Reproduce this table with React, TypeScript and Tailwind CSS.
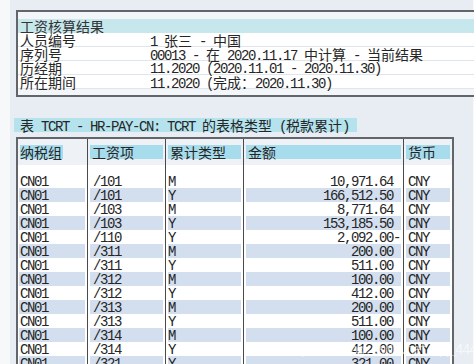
import React from "react";

const CJK_SPLIT = /([\u2E80-\u9FFF\u3000-\u303F\uFF01-\uFF60]+)/;
const CJK_TEST = /^[\u2E80-\u9FFF\u3000-\u303F\uFF01-\uFF60]/;

// SAP GUI style: CJK full width 14px, latin half width 7px
function Txt({ s }: { s: string }) {
  return (
    <>
      {s.split(CJK_SPLIT).map((p, i) =>
        p === "" ? null : CJK_TEST.test(p) ? (
          <span key={i} className="font-['Noto_Sans_CJK_SC',sans-serif]">
            {p}
          </span>
        ) : (
          <span
            key={i}
            className="font-['Liberation_Mono',monospace] tracking-[-1.4px]"
          >
            {p}
          </span>
        )
      )}
    </>
  );
}

const info = [
  ["人员编号", "1 张三 - 中国"],
  ["序列号", "00013 - 在 2020.11.17 中计算 - 当前结果"],
  ["历经期", "11.2020 (2020.11.01 - 2020.11.30)"],
  ["所在期间", "11.2020 (完成：2020.11.30)"],
];

const rows = [
  ["/101", "M", "10,971.64 "],
  ["/101", "Y", "166,512.50 "],
  ["/103", "M", "8,771.64 "],
  ["/103", "Y", "153,185.50 "],
  ["/110", "Y", "2,092.00-"],
  ["/311", "M", "200.00 "],
  ["/311", "Y", "511.00 "],
  ["/312", "M", "100.00 "],
  ["/312", "Y", "412.00 "],
  ["/313", "M", "200.00 "],
  ["/313", "Y", "511.00 "],
  ["/314", "M", "100.00 "],
  ["/314", "Y", "412.00 "],
  ["/321", "Y", "321.00 "],
];

export default function App() {
  return (
    <div className="relative flex w-[474px] h-[364px] overflow-hidden bg-[#f6f8fa] text-[14px] leading-[14px] text-[#262626] whitespace-pre">
      <div className="ml-[10px] w-[463px] h-full bg-[#e8edf4] pt-[10px] flex flex-col">
        {/* result box */}
        <div className="ml-[6px] w-[460px] border-2 border-r-0 border-[#62666b] bg-[#f3f6f9] pt-[7px] pb-[6px]">
          <div className="h-[14px] bg-[#c6e8ec] pl-[2px] text-[#333]">
            <Txt s="工资核算结果" />
          </div>
          {info.map(([k, v]) => (
            <div
              key={k}
              className="flex h-[14px] bg-white border-b border-[#dfe5ec] pl-[2px]"
            >
              <div className="w-[130px]">
                <Txt s={k} />
              </div>
              <div>
                <Txt s={v} />
              </div>
            </div>
          ))}
        </div>

        {/* table title */}
        <div className="mt-[21px] ml-[4px] w-fit h-[14px] bg-[#b4e2ed] pl-[6px] pr-[8px]">
          <Txt s="表 TCRT - HR-PAY-CN: TCRT 的表格类型 (税款累计)" />
        </div>

        {/* table */}
        <div className="mt-[5px] ml-[6px] w-[438px] border-2 border-[#62666b] bg-white">
          <div className="flex h-[26px] bg-[#eef2f6]">
            <div className="w-[69px] pl-[2px] pt-[6px]">
              <div className="w-fit h-[14px] bg-[#a7dced] pr-[1px]">
                <Txt s="纳税组" />
              </div>
            </div>
            <div className="w-[78px] border-l border-[#4a4a4a] px-[2px] pt-[6px]">
              <div className="h-[14px] bg-[#a7dced] pl-[2px]">
                <Txt s="工资项" />
              </div>
            </div>
            <div className="w-[78px] border-l border-[#4a4a4a] px-[2px] pt-[6px]">
              <div className="h-[14px] bg-[#a7dced] pl-[2px]">
                <Txt s="累计类型" />
              </div>
            </div>
            <div className="w-[160px] border-l border-[#4a4a4a] px-[2px] pt-[6px]">
              <div className="h-[14px] bg-[#a7dced] pl-[2px]">
                <Txt s="金额" />
              </div>
            </div>
            <div className="flex-1 border-l border-[#4a4a4a] px-[2px] pt-[6px]">
              <div className="h-[14px] bg-[#a7dced] pl-[2px]">
                <Txt s="货币" />
              </div>
            </div>
          </div>
          <div className="flex h-[9px]">
            <div className="w-[69px]" />
            <div className="w-[78px] border-l border-[#4a4a4a]" />
            <div className="w-[78px] border-l border-[#4a4a4a]" />
            <div className="w-[160px] border-l border-[#4a4a4a]" />
            <div className="flex-1 border-l border-[#4a4a4a]" />
          </div>
          {rows.map(([wt, cum, amt], i) => {
            const bg = i % 2 === 1 ? "bg-[#d3dfee]" : "bg-white";
            return (
              <div key={i} className="flex h-[14px]">
                <div className="w-[69px] pl-[1px] pr-[2px]">
                  <div className={`h-full pl-[1px] ${bg}`}>
                    <Txt s="CN01" />
                  </div>
                </div>
                <div className="w-[78px] border-l border-[#4a4a4a] px-[2px]">
                  <div className={`h-full pl-[3px] ${bg}`}>
                    <Txt s={wt} />
                  </div>
                </div>
                <div className="w-[78px] border-l border-[#4a4a4a] px-[2px]">
                  <div className={`h-full ${bg}`}>
                    <Txt s={cum} />
                  </div>
                </div>
                <div className="w-[160px] border-l border-[#4a4a4a] px-[2px]">
                  <div className={`h-full text-right pr-[1px] ${bg}`}>
                    <Txt s={amt} />
                  </div>
                </div>
                <div className="flex-1 border-l border-[#4a4a4a] px-[2px]">
                  <div className={`h-full pl-[2px] ${bg}`}>
                    <Txt s="CNY" />
                  </div>
                </div>
              </div>
            );
          })}
        </div>
      </div>
      <div className="absolute left-[280px] top-[342px] text-white/60">
        <Txt s="https://blog.csdn.net/qq_44441115" />
      </div>
    </div>
  );
}
